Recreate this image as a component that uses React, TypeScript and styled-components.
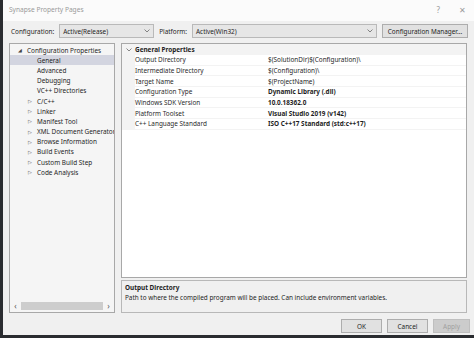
import styled, { createGlobalStyle } from 'styled-components';

const GlobalStyle = createGlobalStyle`
    html, body {
        margin: 0;
        padding: 0;
        background: #2a2c30;
    }
    body {
        font-family: 'Noto Sans', 'Open Sans', sans-serif;
        font-size: 6.4px;
        color: #1e1e1e;
    }
`;

interface TreeItem {
    label: string;
    expandable: boolean;
    selected?: boolean;
}

interface Property {
    name: string;
    value: string;
    bold?: boolean;
}

const treeItems: TreeItem[] = [
    { label: 'General', expandable: false, selected: true },
    { label: 'Advanced', expandable: false },
    { label: 'Debugging', expandable: false },
    { label: 'VC++ Directories', expandable: false },
    { label: 'C/C++', expandable: true },
    { label: 'Linker', expandable: true },
    { label: 'Manifest Tool', expandable: true },
    { label: 'XML Document Generator', expandable: true },
    { label: 'Browse Information', expandable: true },
    { label: 'Build Events', expandable: true },
    { label: 'Custom Build Step', expandable: true },
    { label: 'Code Analysis', expandable: true },
];

const properties: Property[] = [
    { name: 'Output Directory', value: '$(SolutionDir)$(Configuration)\\' },
    { name: 'Intermediate Directory', value: '$(Configuration)\\' },
    { name: 'Target Name', value: '$(ProjectName)' },
    { name: 'Configuration Type', value: 'Dynamic Library (.dll)', bold: true },
    { name: 'Windows SDK Version', value: '10.0.18362.0', bold: true },
    { name: 'Platform Toolset', value: 'Visual Studio 2019 (v142)', bold: true },
    { name: 'C++ Language Standard', value: 'ISO C++17 Standard (std:c++17)', bold: true },
];

function Chevron() {
    return (
        <svg width='6' height='4' viewBox='0 0 6 4'>
            <path d='M0.5 0.5 L3 3 L5.5 0.5' fill='none' stroke='#6a6a6a' strokeWidth='0.8' />
        </svg>
    );
}

function App() {
    return (
        <>
            <GlobalStyle />
            <Window>
                <TitleBar>
                    <Title>Synapse Property Pages</Title>
                    <TitleButtons>
                        <span>?</span>
                        <span>✕</span>
                    </TitleButtons>
                </TitleBar>

                <ConfigRow>
                    <Label>Configuration:</Label>
                    <Dropdown $width={95}>
                        <span>Active(Release)</span>
                        <Chevron />
                    </Dropdown>
                    <Label>Platform:</Label>
                    <Dropdown $width={185}>
                        <span>Active(Win32)</span>
                        <Chevron />
                    </Dropdown>
                    <Button $width={86}>Configuration Manager...</Button>
                </ConfigRow>

                <Main>
                    <TreePanel>
                        <Tree>
                            <TreeRow $indent={8}>
                                <Arrow>◢</Arrow>
                                <span>Configuration Properties</span>
                            </TreeRow>
                            {treeItems.map((item, i) => (
                                <TreeRow key={i} $indent={18} $selected={item.selected}>
                                    <Arrow>{item.expandable ? '▷' : ''}</Arrow>
                                    <span>{item.label}</span>
                                </TreeRow>
                            ))}
                        </Tree>
                        <HScroll>
                            <ScrollArrow>‹</ScrollArrow>
                            <ScrollTrack />
                            <ScrollArrow>›</ScrollArrow>
                        </HScroll>
                    </TreePanel>

                    <RightColumn>
                        <Grid>
                            <GroupRow>
                                <Gutter>
                                    <Chevron />
                                </Gutter>
                                <GroupTitle>General Properties</GroupTitle>
                            </GroupRow>
                            {properties.map((p, i) => (
                                <PropRow key={i}>
                                    <Gutter />
                                    <PropName>{p.name}</PropName>
                                    <PropValue $bold={p.bold}>{p.value}</PropValue>
                                </PropRow>
                            ))}
                        </Grid>
                        <Description>
                            <DescTitle>Output Directory</DescTitle>
                            <div>Path to where the compiled program will be placed. Can include environment variables.</div>
                        </Description>
                    </RightColumn>
                </Main>

                <Footer>
                    <Button $width={41}>OK</Button>
                    <Button $width={41}>Cancel</Button>
                    <Button $width={37} $disabled>Apply</Button>
                </Footer>
            </Window>
        </>
    );
}

export default App;

const Window = styled.div`
    margin-left: 3px;
    width: 471px;
    height: 335px;
    background: #f0f0f0;
    display: flex;
    flex-direction: column;
    box-sizing: border-box;
`;

const TitleBar = styled.div`
    height: 21px;
    background: #fbfbfb;
    display: flex;
    align-items: center;
    justify-content: space-between;
    padding: 0 8px 2px 6px;
    box-sizing: border-box;
`;

const Title = styled.div`
    color: #9a9a9a;
    font-size: 6.6px;
`;

const TitleButtons = styled.div`
    display: flex;
    gap: 19px;
    color: #9a9a9a;
    font-size: 8px;
`;

const ConfigRow = styled.div`
    display: flex;
    align-items: center;
    height: 14px;
    margin-top: 3px;
    padding-left: 8px;
    gap: 5px;
`;

const Label = styled.span`
    color: #1e1e1e;
`;

const Dropdown = styled.div<{ $width: number }>`
    width: ${p => p.$width}px;
    height: 14px;
    box-sizing: border-box;
    background: #e6e6e6;
    border: 1px solid #b9b9b9;
    display: flex;
    align-items: center;
    justify-content: space-between;
    padding: 0 3px 0 3px;
`;

const Button = styled.div<{ $width: number; $disabled?: boolean }>`
    width: ${p => p.$width}px;
    height: 14px;
    box-sizing: border-box;
    background: ${p => (p.$disabled ? '#cccccc' : '#e1e1e1')};
    color: ${p => (p.$disabled ? '#a0a0a0' : '#1e1e1e')};
    border: 1px solid ${p => (p.$disabled ? '#bfbfbf' : '#adadad')};
    display: flex;
    align-items: center;
    justify-content: center;
    white-space: nowrap;
`;

const Main = styled.div`
    display: flex;
    gap: 6px;
    margin-top: 5px;
    padding-left: 6px;
    height: 270px;
`;

const TreePanel = styled.div`
    width: 106px;
    box-sizing: border-box;
    background: #f5f5f5;
    border: 1px solid #a8a8a8;
    display: flex;
    flex-direction: column;
    justify-content: space-between;
    overflow: hidden;
`;

const Tree = styled.div`
    padding-top: 1px;
`;

const TreeRow = styled.div<{ $indent: number; $selected?: boolean }>`
    display: flex;
    align-items: center;
    height: 10.2px;
    padding-left: ${p => p.$indent}px;
    background: ${p => (p.$selected ? '#d3d5e0' : 'transparent')};
    white-space: nowrap;
`;

const Arrow = styled.span`
    width: 9px;
    flex-shrink: 0;
    font-size: 4.5px;
    color: #444;
`;

const HScroll = styled.div`
    display: flex;
    align-items: center;
    height: 9px;
    margin: 0 3px 2px 3px;
    gap: 3px;
`;

const ScrollArrow = styled.span`
    font-size: 8px;
    color: #555;
    width: 5px;
    text-align: center;
`;

const ScrollTrack = styled.div`
    flex: 1;
    height: 8px;
    background: #cdcdcd;
`;

const RightColumn = styled.div`
    width: 346px;
    display: flex;
    flex-direction: column;
    gap: 2px;
`;

const Grid = styled.div`
    height: 235px;
    box-sizing: border-box;
    background: #ffffff;
    border: 1px solid #a8a8a8;
`;

const GroupRow = styled.div`
    display: flex;
    align-items: center;
    height: 11px;
    background: #f3f3f3;
`;

const Gutter = styled.div`
    width: 13px;
    align-self: stretch;
    background: #f3f3f3;
    display: flex;
    align-items: center;
    justify-content: center;
`;

const GroupTitle = styled.span`
    font-weight: bold;
`;

const PropRow = styled.div`
    display: flex;
    align-items: center;
    height: 10.7px;
    border-bottom: 1px solid #f3f3f3;
    box-sizing: border-box;
`;

const PropName = styled.span`
    width: 133px;
    color: #2a2a2a;
    white-space: nowrap;
`;

const PropValue = styled.span<{ $bold?: boolean }>`
    font-weight: ${p => (p.$bold ? 'bold' : 'normal')};
    white-space: nowrap;
`;

const Description = styled.div`
    height: 33px;
    box-sizing: border-box;
    border: 1px solid #b8b8b8;
    padding: 2px 3px;
    line-height: 10px;
`;

const DescTitle = styled.div`
    font-weight: bold;
`;

const Footer = styled.div`
    display: flex;
    justify-content: flex-end;
    gap: 5px;
    margin-top: 6px;
    padding-right: 4px;
`;
